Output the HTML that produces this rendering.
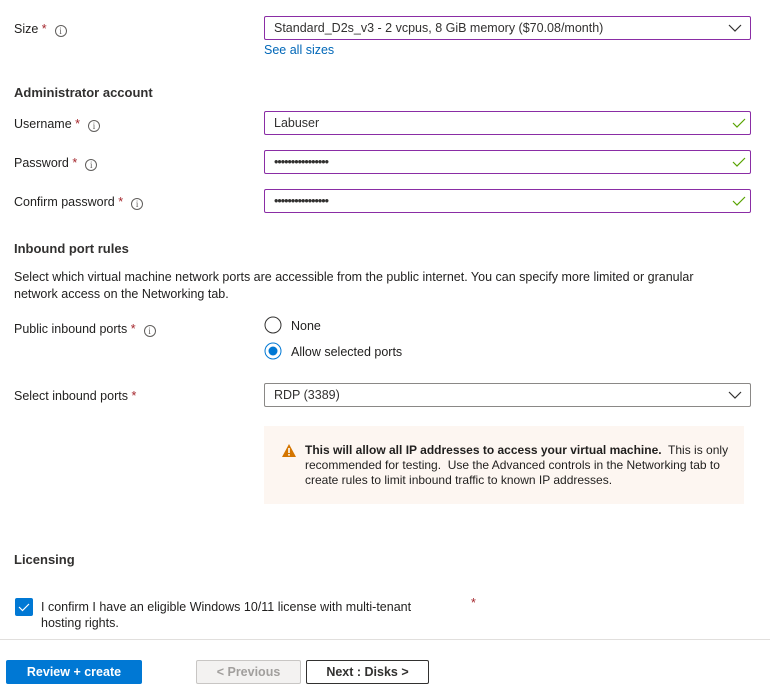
<!DOCTYPE html>
<html><head><meta charset="utf-8"><style>
*{margin:0;padding:0;box-sizing:border-box}
body{width:770px;height:697px;background:#fff;font-family:"Liberation Sans",sans-serif;font-size:12.5px;color:#323130;position:relative;overflow:hidden}
.a{position:absolute;white-space:nowrap;line-height:16px}
.req{color:#a4262c}
.info{display:inline-block;width:12px;height:12px;border:1px solid #605e5c;border-radius:50%;font-size:9px;line-height:10px;text-align:center;color:#605e5c;vertical-align:-1px;margin-left:8px;font-family:"Liberation Serif",serif}
.box{position:absolute;left:264px;width:487px;height:24px;border:1px solid #8a2da5;border-radius:2px;padding-left:9px;line-height:22px}
.gray{border-color:#8a8886}
.h{font-weight:bold;font-size:13px}
.l{color:#201f1e}
svg{position:absolute}
</style></head><body>
<div class="a l" style="left:14px;top:21px">Size <span class="req">*</span><span class="info">i</span></div>
<div class="box" style="top:16px">Standard_D2s_v3 - 2 vcpus, 8 GiB memory ($70.08/month)</div>
<svg style="left:728px;top:23px" width="14" height="10"><path d="M1 2l6 6 6-6" stroke="#323130" fill="none" stroke-width="1.2"/></svg>
<div class="a" style="left:264px;top:42px;color:#0067b8">See all sizes</div>

<div class="a h" style="left:14px;top:85px">Administrator account</div>
<div class="a l" style="left:14px;top:116px">Username <span class="req">*</span><span class="info">i</span></div>
<div class="box" style="top:111px">Labuser</div>
<div class="a l" style="left:14px;top:155px">Password <span class="req">*</span><span class="info">i</span></div>
<div class="box" style="top:150px;letter-spacing:-1px">••••••••••••••••</div>
<div class="a l" style="left:14px;top:194px">Confirm password <span class="req">*</span><span class="info">i</span></div>
<div class="box" style="top:189px;letter-spacing:-1px">••••••••••••••••</div>
<svg style="left:732px;top:117px" width="14" height="12"><path d="M1 6l4 4 8-8" stroke="#57a300" fill="none" stroke-width="1.2"/></svg>
<svg style="left:732px;top:156px" width="14" height="12"><path d="M1 6l4 4 8-8" stroke="#57a300" fill="none" stroke-width="1.2"/></svg>
<svg style="left:732px;top:195px" width="14" height="12"><path d="M1 6l4 4 8-8" stroke="#57a300" fill="none" stroke-width="1.2"/></svg>

<div class="a h" style="left:14px;top:241px">Inbound port rules</div>
<div class="a l" style="left:14px;top:269px;line-height:17px">Select which virtual machine network ports are accessible from the public internet. You can specify more limited or granular<br>network access on the Networking tab.</div>
<div class="a l" style="left:14px;top:321px">Public inbound ports <span class="req">*</span><span class="info">i</span></div>
<svg style="left:264px;top:316px" width="20" height="46"><circle cx="9" cy="9" r="8" stroke="#323130" fill="none" stroke-width="1"/><circle cx="9" cy="35" r="8" stroke="#0078d4" fill="none" stroke-width="1"/><circle cx="9" cy="35" r="4.5" fill="#0078d4"/></svg>
<div class="a l" style="left:291px;top:318px">None</div>
<div class="a l" style="left:291px;top:344px">Allow selected ports</div>
<div class="a l" style="left:14px;top:388px">Select inbound ports <span class="req">*</span></div>
<div class="box gray" style="top:383px">RDP (3389)</div>
<svg style="left:728px;top:390px" width="14" height="10"><path d="M1 2l6 6 6-6" stroke="#323130" fill="none" stroke-width="1.2"/></svg>

<div style="position:absolute;left:264px;top:426px;width:480px;height:78px;background:#fdf6f1"></div>
<svg style="left:281px;top:443px" width="16" height="15"><path d="M8 1L15 14H1z" fill="#d47500"/><rect x="7.2" y="5" width="1.6" height="5" fill="#fff"/><rect x="7.2" y="11" width="1.6" height="1.6" fill="#fff"/></svg>
<div class="a l" style="left:305px;top:443px;font-size:12px;line-height:15px"><b>This will allow all IP addresses to access your virtual machine.</b>&nbsp; This is only<br>recommended for testing.&nbsp; Use the Advanced controls in the Networking tab to<br>create rules to limit inbound traffic to known IP addresses.</div>

<div class="a h" style="left:14px;top:552px">Licensing</div>
<div style="position:absolute;left:15px;top:598px;width:18px;height:18px;background:#0078d4;border-radius:2px"></div>
<svg style="left:15px;top:598px" width="18" height="18"><path d="M4 9l3.5 3.5L14 6" stroke="#fff" fill="none" stroke-width="1.2"/></svg>
<div class="a l" style="left:41px;top:599px">I confirm I have an eligible Windows 10/11 license with multi-tenant<br>hosting rights.</div>
<div class="a req" style="left:471px;top:595px">*</div>

<div style="position:absolute;left:0;top:639px;width:770px;height:1px;background:#e1dfdd"></div>
<div class="a" style="left:6px;top:660px;width:136px;height:24px;background:#0078d4;color:#fff;font-weight:bold;text-align:center;line-height:24px;border-radius:2px">Review + create</div>
<div class="a" style="left:196px;top:660px;width:105px;height:24px;background:#f3f2f1;border:1px solid #c8c6c4;color:#a19f9d;font-weight:bold;text-align:center;line-height:22px;border-radius:2px">&lt; Previous</div>
<div class="a" style="left:306px;top:660px;width:123px;height:24px;border:1px solid #323130;text-align:center;line-height:22px;font-weight:bold;border-radius:2px">Next : Disks &gt;</div>
</body></html>
